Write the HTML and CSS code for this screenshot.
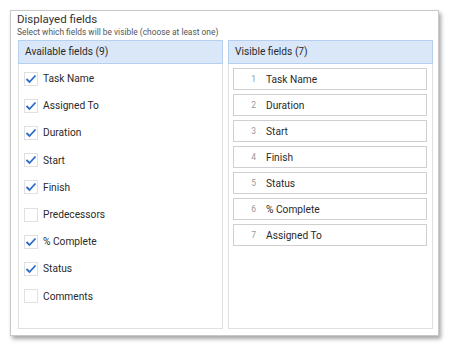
FILE: index.html
```html
<!DOCTYPE html>
<html lang="en">
<head>
    <meta charset="UTF-8">
    <meta name="viewport" content="width=device-width, initial-scale=1.0">
    <title>Displayed fields</title>
    <link rel="stylesheet" href="styles.css">
</head>
<body>
    <div class="dialog">
        <div class="title">Displayed fields</div>
        <div class="subtitle">Select which fields will be visible (choose at least one)</div>

        <div class="panels">
            <div class="panel">
                <div class="panel-header">Available fields (9)</div>
                <ul class="check-list">
                    <li><span class="checkbox"><svg viewBox="0 0 12 12"><polyline points="1.5,6 4.5,9 10.5,2.5"/></svg></span>Task Name</li>
                    <li><span class="checkbox"><svg viewBox="0 0 12 12"><polyline points="1.5,6 4.5,9 10.5,2.5"/></svg></span>Assigned To</li>
                    <li><span class="checkbox"><svg viewBox="0 0 12 12"><polyline points="1.5,6 4.5,9 10.5,2.5"/></svg></span>Duration</li>
                    <li><span class="checkbox"><svg viewBox="0 0 12 12"><polyline points="1.5,6 4.5,9 10.5,2.5"/></svg></span>Start</li>
                    <li><span class="checkbox"><svg viewBox="0 0 12 12"><polyline points="1.5,6 4.5,9 10.5,2.5"/></svg></span>Finish</li>
                    <li><span class="checkbox"></span>Predecessors</li>
                    <li><span class="checkbox"><svg viewBox="0 0 12 12"><polyline points="1.5,6 4.5,9 10.5,2.5"/></svg></span>% Complete</li>
                    <li><span class="checkbox"><svg viewBox="0 0 12 12"><polyline points="1.5,6 4.5,9 10.5,2.5"/></svg></span>Status</li>
                    <li><span class="checkbox"></span>Comments</li>
                </ul>
            </div>

            <div class="panel">
                <div class="panel-header">Visible fields (7)</div>
                <ol class="order-list">
                    <li><span class="num">1</span>Task Name</li>
                    <li><span class="num">2</span>Duration</li>
                    <li><span class="num">3</span>Start</li>
                    <li><span class="num">4</span>Finish</li>
                    <li><span class="num">5</span>Status</li>
                    <li><span class="num">6</span>% Complete</li>
                    <li><span class="num">7</span>Assigned To</li>
                </ol>
            </div>
        </div>
    </div>
</body>
</html>
```

FILE: styles.css
```css
body {
    margin: 0;
    padding: 10px;
    font-family: Roboto, "Liberation Sans", sans-serif;
    color: #2a2a2a;
    background: #fff;
}

.dialog {
    width: 415px;
    height: 324px;
    border: 1px solid #c8c8c8;
    box-shadow: 2px 3px 4px rgba(0, 0, 0, 0.35);
    padding: 0 5px 0 7px;
}

.title {
    font-size: 11.5px;
    line-height: 14px;
    margin-top: 1px;
    margin-left: -1px;
    color: #333;
}

.subtitle {
    font-size: 8.4px;
    line-height: 12px;
    color: #555;
    margin-left: -1px;
    margin-bottom: 2px;
}

.panels {
    display: grid;
    grid-template-columns: 205px 205px;
    gap: 5px;
    height: 289px;
}

.panel {
    border: 1px solid #e0e0e0;
    border-top: none;
    display: flex;
    flex-direction: column;
}

.panel-header {
    height: 22px;
    line-height: 22px;
    background: #d9e7f8;
    border: 1px solid #b5cff0;
    margin: 0 -1px;
    padding-left: 6px;
    font-size: 10.2px;
}

.check-list {
    list-style: none;
    margin: 1px 0 0;
    padding: 0 0 0 5px;
}

.check-list li {
    height: 27.2px;
    display: flex;
    align-items: center;
    font-size: 10.2px;
}

.checkbox {
    width: 12px;
    height: 12px;
    border: 1px solid #e0e0e0;
    margin-right: 5px;
    display: flex;
}

.checkbox svg {
    width: 12px;
    height: 12px;
    fill: none;
    stroke: #2b6cc9;
    stroke-width: 1.8;
}

.order-list {
    list-style: none;
    margin: 4px 0 0;
    padding: 0 5px 0 4px;
    display: flex;
    flex-direction: column;
    gap: 4px;
}

.order-list li {
    height: 20px;
    border: 1px solid #cfcfcf;
    display: flex;
    align-items: center;
    font-size: 10.2px;
}

.num {
    width: 22px;
    text-align: right;
    margin-right: 10px;
    font-size: 8.5px;
    color: #999;
}
```
